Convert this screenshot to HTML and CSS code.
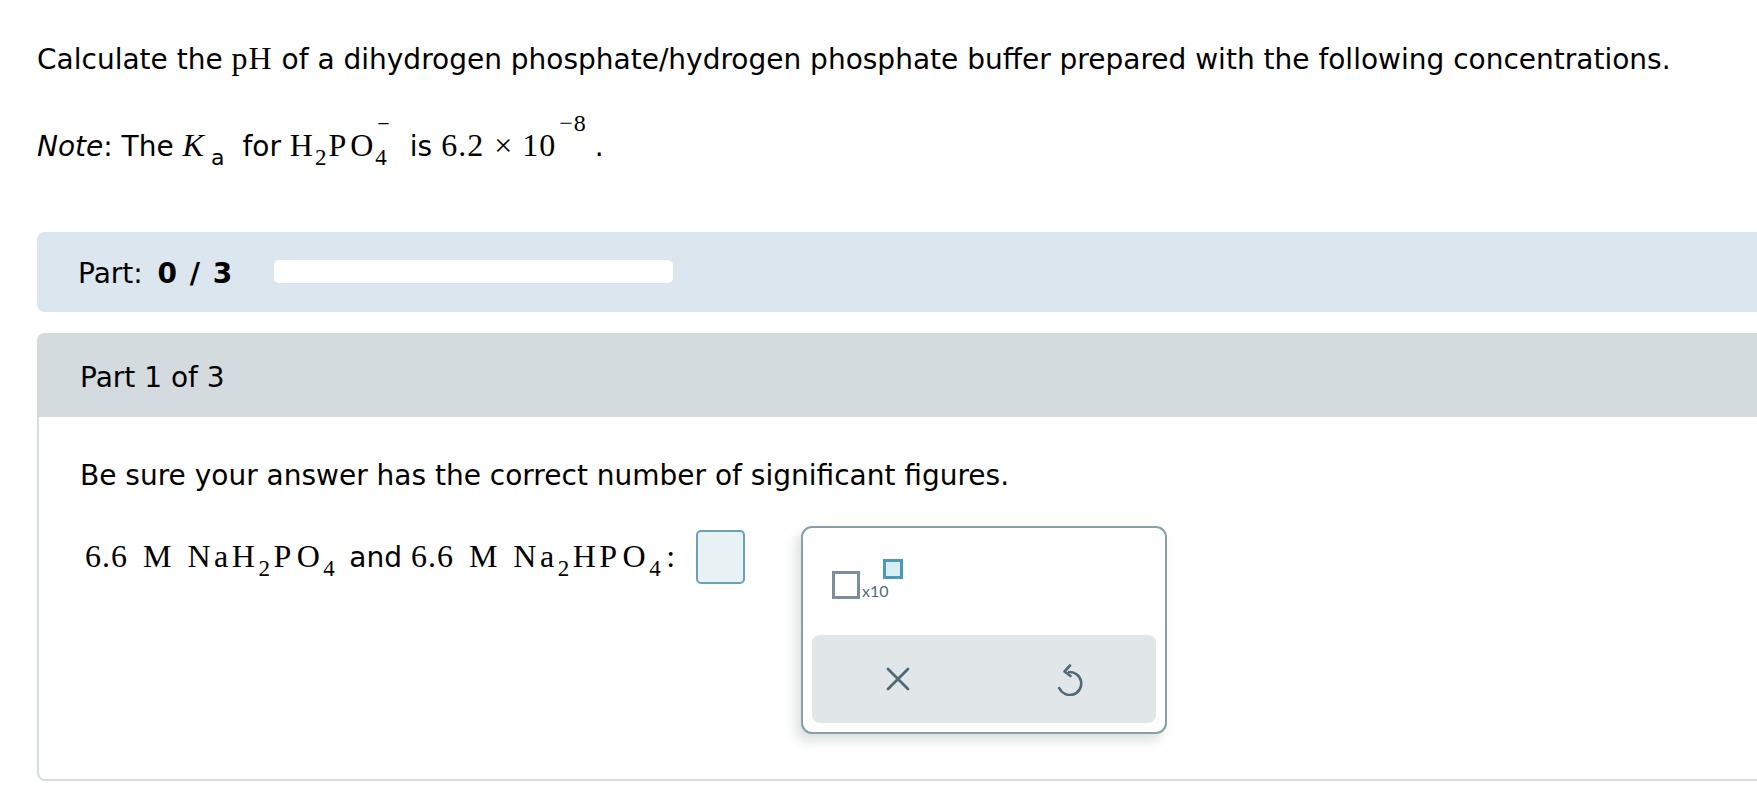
FILE: index.html
```html
<!DOCTYPE html>
<html>
<head>
<meta charset="utf-8">
<link rel="stylesheet" href="styles.css">
</head>
<body>
<div class="page">
  <p class="q">Calculate the <span class="m">pH</span> of a dihydrogen phosphate/hydrogen phosphate buffer prepared with the following concentrations.</p>
  <p class="note"><i>Note</i>: The <span class="m"><i class="kk">K</i></span><span class="ka">a</span>for <span class="m chem-n">H<span class="sub">2</span>P<span class="po">O</span><span class="stack"><span class="st-sup">−</span><span class="sub">4</span></span></span><span class="gap">is</span> <span class="m">6.2<span class="op">×</span>10<span class="sup">−8</span></span><span class="dot">.</span></p>

  <div class="partbar">
    <span class="partlabel">Part: <b>0 / 3</b></span>
    <div class="progress"></div>
  </div>

  <div class="part">
    <div class="part-head">Part 1 of 3</div>
    <div class="part-body">
      <p class="sig">Be sure your answer has the correct number of significant figures.</p>
      <div class="answer-row">
        <div class="formula"><span class="m">6.6 M <span class="chem">NaH<span class="sub">2</span>P<span class="po">O</span><span class="sub">4</span></span></span><span class="and">and</span> <span class="m">6.6 M <span class="chem">Na<span class="sub">2</span>HP<span class="po">O</span><span class="sub">4</span></span><span class="colon">:</span></span></div>
        <div class="answer-box"></div>
        <div class="popup">
          <div class="sci">
            <span class="base-box"></span><span class="x10">x10</span><span class="exp-box"></span>
          </div>
          <div class="actions">
            <button class="act" aria-label="clear">
              <svg width="26" height="26" viewBox="0 0 26 26"><path d="M3 3 L23 23 M23 3 L3 23" stroke="#4f6a75" stroke-width="2.8" stroke-linecap="round" fill="none"/></svg>
            </button>
            <button class="act" aria-label="undo">
              <svg width="28" height="34" viewBox="0 0 28 34"><path d="M13 10 A11.5 11.5 0 1 1 3.2 26" stroke="#4f6a75" stroke-width="2.6" stroke-linecap="round" fill="none"/><path d="M14 3.5 L8.5 9.5 L14.5 14" stroke="#4f6a75" stroke-width="2.6" stroke-linecap="round" stroke-linejoin="round" fill="none"/></svg>
            </button>
          </div>
        </div>
      </div>
    </div>
  </div>
</div>
</body>
</html>
```

FILE: styles.css
```css
html, body {
  margin: 0;
  padding: 0;
  overflow: hidden;
  background: #ffffff;
}

body {
  font-family: "DejaVu Sans", Verdana, sans-serif;
  font-size: 28px;
  color: #000;
}

.page {
  padding-left: 37px;
  width: 1800px;
}

p { margin: 0; }

.q {
  padding-top: 44px;
  height: 32px;
  line-height: 32px;
  white-space: nowrap;
}

.m {
  font-family: "Liberation Serif", "Times New Roman", serif;
  font-size: 32px;
  letter-spacing: 1px;
  word-spacing: 6px;
  line-height: 0;
}

.m i { font-style: italic; }

.chem { letter-spacing: 3.5px; }

.chem-n { letter-spacing: 2px; }

.kk { margin-right: 2px; }

.note {
  margin-top: 55px;
  height: 32px;
  line-height: 32px;
  white-space: nowrap;
}

.ka {
  font-size: 22px;
  position: relative;
  top: 9px;
  margin-left: 4px;
  margin-right: 18px;
}

.sub {
  font-size: 23px;
  vertical-align: -9px;
  line-height: 0;
}

.po { margin-left: 2px; }

.stack {
  display: inline-block;
  position: relative;
  line-height: 0;
}

.st-sup {
  position: absolute;
  left: 2px;
  top: -21px;
  font-size: 22px;
  line-height: 0;
}

.gap { margin-left: 21px; }

.op { margin: 0 9px 0 10px; }

.sup {
  font-size: 24px;
  position: relative;
  top: -25px;
  line-height: 0;
  margin-left: 3px;
}

.dot { margin-left: 8px; }

.and { margin-left: 11px; }

.colon { margin-left: 2px; }

.partbar {
  margin-top: 69px;
  height: 80px;
  box-sizing: border-box;
  padding: 26px 0 0 41px;
  background: #dce6ef;
  border-radius: 8px;
  display: flex;
  align-items: flex-start;
  line-height: 32px;
}

.partlabel b {
  letter-spacing: 1.5px;
  margin-left: 6px;
}

.progress {
  margin-left: 40px;
  margin-top: 2px;
  width: 399px;
  height: 23px;
  background: #ffffff;
  border-radius: 5px;
}

.part {
  margin-top: 21px;
}

.part-head {
  height: 84px;
  box-sizing: border-box;
  padding: 29px 0 0 43px;
  line-height: 32px;
  background: #d3dbdf;
  border-radius: 8px 8px 0 0;
}

.part-body {
  height: 364px;
  box-sizing: border-box;
  border: 2px solid #d6dde1;
  border-top: none;
  border-radius: 0 0 8px 8px;
  padding: 43px 0 0 41px;
}

.sig {
  line-height: 32px;
  height: 32px;
}

.answer-row {
  margin-top: 34px;
  display: flex;
  align-items: flex-start;
}

.formula {
  margin-top: 12px;
  margin-left: 5px;
  height: 40px;
  line-height: 40px;
  white-space: nowrap;
}

.answer-box {
  margin-top: 4px;
  margin-left: 20px;
  width: 49px;
  height: 54px;
  box-sizing: border-box;
  border: 2px solid #6ba3b5;
  border-radius: 5px;
  background: #e8f2f5;
}

.popup {
  margin-left: 56px;
  width: 366px;
  height: 208px;
  box-sizing: border-box;
  border: 2px solid #8a9ea7;
  border-radius: 11px;
  background: #fff;
  box-shadow: -5px 7px 12px rgba(40, 60, 70, 0.16);
  padding: 0 9px 9px 9px;
  display: flex;
  flex-direction: column;
  justify-content: space-between;
}

.sci {
  display: flex;
  align-items: flex-start;
  padding: 31px 0 0 20px;
  height: 75px;
  box-sizing: border-box;
}

.base-box {
  margin-top: 12px;
  width: 28px;
  height: 28px;
  box-sizing: border-box;
  border: 3px solid #7c8f98;
}

.x10 {
  font-family: Lato, "Open Sans", sans-serif;
  font-size: 16px;
  color: #546a73;
  margin-top: 23px;
  margin-left: 2px;
  line-height: 18px;
}

.exp-box {
  margin-left: -6px;
  width: 20px;
  height: 20px;
  box-sizing: border-box;
  border: 3px solid #4a9ab5;
  background: #d6eef4;
}

.actions {
  height: 88px;
  background: #e1e6e9;
  border-radius: 8px;
  display: flex;
}

.act {
  flex: 1;
  border: none;
  background: transparent;
  padding: 0;
  display: flex;
  align-items: center;
  justify-content: center;
}
```
